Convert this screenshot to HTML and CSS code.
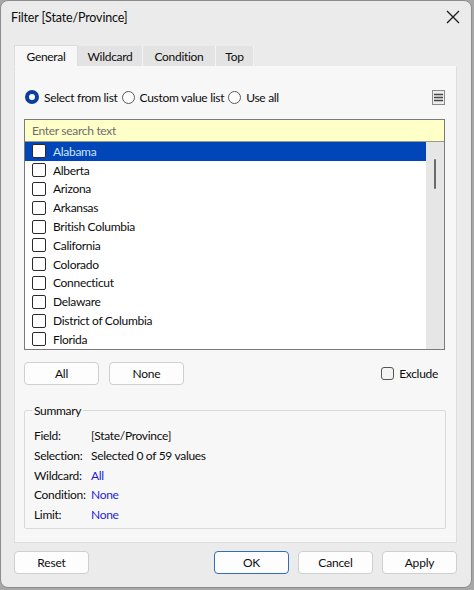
FILE: index.html
```html
<!DOCTYPE html>
<html>
<head>
<meta charset="utf-8">
<link rel="stylesheet" href="styles.css">
</head>
<body>
<div class="window">
  <div class="titlebar">
    <span class="title">Filter [State/Province]</span>
    <svg class="close" width="14" height="14" viewBox="0 0 14 14"><path d="M1 1 L13 13 M13 1 L1 13" stroke="#1a1a1a" stroke-width="1.3" fill="none"/></svg>
  </div>
  <div class="content">
    <div class="tabs">
      <div class="tab active">General</div>
      <div class="tab t-wild">Wildcard</div>
      <div class="tab t-cond">Condition</div>
      <div class="tab t-top">Top</div>
    </div>
    <div class="panel">
      <div class="radios">
        <label class="radio"><span class="rb on"></span>Select from list</label>
        <label class="radio"><span class="rb"></span>Custom value list</label>
        <label class="radio"><span class="rb"></span>Use all</label>
        <span class="menu-btn"><svg width="9" height="9" viewBox="0 0 9 9"><path d="M0 1.5H9M0 4.5H9M0 7.5H9" stroke="#444" stroke-width="1.6"/></svg></span>
      </div>
      <div class="listbox">
        <div class="search">Enter search text</div>
        <div class="list-body">
          <div class="items">
            <div class="item sel"><span class="cb"></span>Alabama</div>
            <div class="item"><span class="cb"></span>Alberta</div>
            <div class="item"><span class="cb"></span>Arizona</div>
            <div class="item"><span class="cb"></span>Arkansas</div>
            <div class="item"><span class="cb"></span>British Columbia</div>
            <div class="item"><span class="cb"></span>California</div>
            <div class="item"><span class="cb"></span>Colorado</div>
            <div class="item"><span class="cb"></span>Connecticut</div>
            <div class="item"><span class="cb"></span>Delaware</div>
            <div class="item"><span class="cb"></span>District of Columbia</div>
            <div class="item"><span class="cb"></span>Florida</div>
          </div>
          <div class="scrollbar"><span class="thumb"></span></div>
        </div>
      </div>
      <div class="list-actions">
        <button class="btn">All</button>
        <button class="btn">None</button>
        <label class="exclude"><span class="cb2"></span>Exclude</label>
      </div>
      <fieldset class="summary">
        <legend>Summary</legend>
        <div class="srow"><span class="lbl">Field:</span><span>[State/Province]</span></div>
        <div class="srow"><span class="lbl">Selection:</span><span>Selected 0 of 59 values</span></div>
        <div class="srow"><span class="lbl">Wildcard:</span><span class="blue">All</span></div>
        <div class="srow"><span class="lbl">Condition:</span><span class="blue">None</span></div>
        <div class="srow"><span class="lbl">Limit:</span><span class="blue">None</span></div>
      </fieldset>
    </div>
    <div class="footer">
      <button class="btn">Reset</button>
      <span class="spacer"></span>
      <button class="btn default">OK</button>
      <button class="btn">Cancel</button>
      <button class="btn">Apply</button>
    </div>
  </div>
</div>
</body>
</html>
```
FILE: styles.css
```css
html, body { margin: 0; padding: 0; }
body {
  background: #a7a7a7;
  width: 474px;
  height: 590px;
  font-family: Lato, "Noto Sans", sans-serif;
  font-size: 12px;
  letter-spacing: -0.3px;
  color: #0d0d0d;
}
.window {
  box-sizing: border-box;
  width: 472px;
  height: 588px;
  background: #ebebeb;
  border: 1px solid #8d8d8d;
  border-radius: 8px;
  display: flex;
  flex-direction: column;
}
.titlebar {
  height: 33px;
  display: flex;
  align-items: center;
  justify-content: space-between;
  padding: 0 11px 0 10px;
}
.title { font-size: 12.5px; letter-spacing: -0.15px; }
.close { display: block; margin-top: -2px; }
.content { padding: 0 14px 0 13px; }
.tabs { display: flex; margin-top: 12px; height: 20px; }
.tab {
  box-sizing: border-box;
  height: 20px;
  display: flex;
  align-items: center;
  justify-content: center;
  background: #e3e3e3;
  border-right: 1px solid #f4f4f4;
}
.tab.active {
  background: #f7f7f7;
  width: 64px;
  border: 1px solid #dcdcdc;
  border-bottom: none;
  height: 21px;
  margin-top: -1px;
}
.t-wild { width: 65px; }
.t-cond { width: 73px; }
.t-top { width: 38px; }
.panel {
  box-sizing: border-box;
  height: 477px;
  background: #f7f7f7;
  border: 1px solid #dedede;
  border-top-color: #f7f7f7;
  padding: 0 10px 0 9px;
}
.radios {
  display: flex;
  align-items: center;
  margin-top: 22px;
  height: 16px;
}
.radio { display: flex; align-items: center; margin-right: 4px; }
.rb {
  box-sizing: border-box;
  width: 13px; height: 13px;
  border-radius: 50%;
  border: 1px solid #5a5a5a;
  margin-right: 5px;
  background: #fdfdfd;
}
.rb.on {
  border: 4px solid #0b3f9c;
  background: #fff;
  width: 14px; height: 14px;
}
.radios .radio:first-child { margin-left: 1px; }
.menu-btn {
  margin-left: auto;
  margin-right: 1px;
  box-sizing: border-box;
  width: 13px; height: 15px;
  border: 1px solid #8a8a8a;
  background: #ececec;
  display: flex; align-items: center; justify-content: center;
}
.listbox {
  box-sizing: border-box;
  margin-top: 14px;
  width: 421px;
  height: 231px;
  border: 1px solid #7a7a7a;
  background: #fff;
  display: flex;
  flex-direction: column;
}
.search {
  height: 21px;
  background: #ffffc8;
  border-bottom: 1px solid #9a9a8a;
  color: #6d6d6d;
  padding-left: 7px;
  display: flex; align-items: center;
}
.list-body { flex: 1; display: flex; }
.items { flex: 1; }
.item {
  height: 18.8px;
  display: flex;
  align-items: center;
  padding-left: 7px;
}
.item.sel { background: #0046b8; color: #cfe3ff; }
.cb {
  box-sizing: border-box;
  width: 14px; height: 14px;
  border: 1px solid #2a2a2a;
  border-radius: 2px;
  background: #fff;
  margin-right: 7px;
}
.scrollbar {
  width: 18px;
  background: #e6e6e6;
  display: flex;
  justify-content: center;
}
.thumb {
  width: 2px;
  height: 30px;
  background: #6a6a6a;
  margin-top: 17px;
  border-radius: 1px;
}
.list-actions {
  display: flex;
  align-items: center;
  margin-top: 12px;
  height: 23px;
}
.btn {
  box-sizing: border-box;
  width: 75px;
  height: 23px;
  background: #fdfdfd;
  border: 1px solid #cfcfcf;
  border-radius: 4px;
  font-family: inherit;
  font-size: 12px;
  letter-spacing: -0.2px;
  color: #0d0d0d;
  padding: 0;
}
.list-actions .btn { margin-right: 10px; }
.exclude {
  margin-left: auto;
  margin-right: 8px;
  display: flex; align-items: center;
}
.cb2 {
  box-sizing: border-box;
  width: 13px; height: 13px;
  border: 1px solid #555;
  border-radius: 3px;
  background: #f4f4f4;
  margin-right: 5px;
}
.summary {
  box-sizing: border-box;
  margin: 18px 0 0 0;
  width: 422px;
  height: 126px;
  border: 1px solid #dadada;
  border-radius: 2px;
  padding: 8px 0 0 9px;
}
.summary legend { padding: 0 2px; margin-left: -2px; }
.srow { display: flex; height: 19.7px; align-items: center; }
.lbl { width: 57px; }
.blue { color: #1f1fd6; }
.footer {
  display: flex;
  margin-top: 8px;
  gap: 9px;
}
.footer .spacer { flex: 1; }
.btn.default { border: 1.5px solid #2f6fb6; }
```
